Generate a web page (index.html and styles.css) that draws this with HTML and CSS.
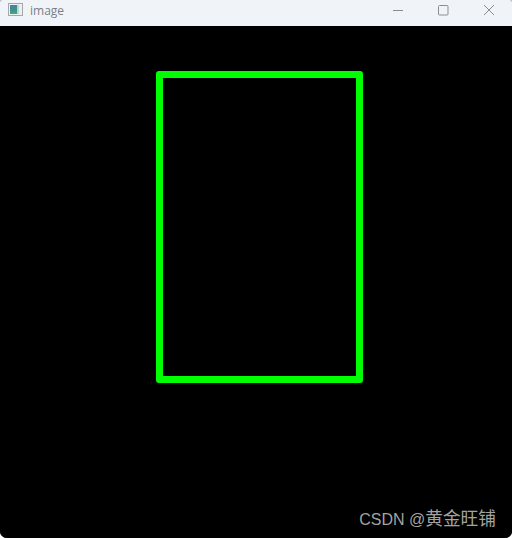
FILE: index.html
```html
<!DOCTYPE html>
<html lang="zh">
<head>
<meta charset="utf-8">
<title>image</title>
<link rel="stylesheet" href="styles.css">
</head>
<body>
<div class="window">
  <header class="titlebar">
    <svg class="app-icon" width="16" height="14" viewBox="0 0 16 14">
      <defs>
        <linearGradient id="pic" x1="0" y1="0" x2="0" y2="1">
          <stop offset="0" stop-color="#4a7fa6"/>
          <stop offset="0.55" stop-color="#3f8f8c"/>
          <stop offset="1" stop-color="#43ad6f"/>
        </linearGradient>
      </defs>
      <rect x="0.5" y="0.5" width="14" height="12" fill="#eef1f3" stroke="#a4a8ac"/>
      <rect x="2" y="2" width="7" height="9" fill="url(#pic)"/>
      <rect x="9" y="2" width="2" height="9" fill="#b9d6cc"/>
      <rect x="11" y="2" width="3" height="9" fill="#e9f1ee"/>
    </svg>
    <span class="title">image</span>
    <div class="controls">
      <svg class="ctl" width="46" height="26" viewBox="0 0 46 26"><path d="M19 10.5H29" stroke="#8a8d90" fill="none"/></svg>
      <svg class="ctl" width="46" height="26" viewBox="0 0 46 26"><rect x="18.5" y="5.5" width="9.5" height="9.5" rx="1" stroke="#8a8d90" fill="none"/></svg>
      <svg class="ctl" width="46" height="26" viewBox="0 0 46 26"><path d="M18 5L28 15M28 5L18 15" stroke="#8a8d90" fill="none"/></svg>
    </div>
  </header>
  <main class="canvas">
    <div class="rect"></div>
    <span class="watermark">CSDN @<span class="cjk">黄金旺铺</span></span>
  </main>
</div>
</body>
</html>
```
FILE: styles.css
```css
html, body { margin: 0; padding: 0; background: #fff; }
.window { width: 512px; height: 538px; display: flex; flex-direction: column; overflow: hidden; background: #000; border-radius: 2px 2px 7px 7px; }
.titlebar { flex: 0 0 26px; height: 26px; background: #f0f4f9; display: flex; align-items: flex-start; box-sizing: border-box; padding-left: 8px; }
.app-icon { margin-top: 3px; flex: none; }
.title { font: 12px/22px "Open Sans", "Noto Sans", sans-serif; color: #7b7f84; margin-left: 6px; }
.controls { margin-left: auto; display: flex; }
.ctl { display: block; flex: none; }
.canvas { position: relative; flex: 1; background: #000; padding: 45px 0 0 156px; box-sizing: border-box; }
.rect { width: 207px; height: 312px; box-sizing: border-box; border: 7px solid #00ff00; border-radius: 3px; }
.watermark { position: absolute; right: 16px; bottom: 8px; font: 16px/20px "Liberation Sans", "Noto Sans CJK SC", sans-serif; color: #a3a3a3; white-space: nowrap; }
.cjk { font-size: 17.7px; }
```
